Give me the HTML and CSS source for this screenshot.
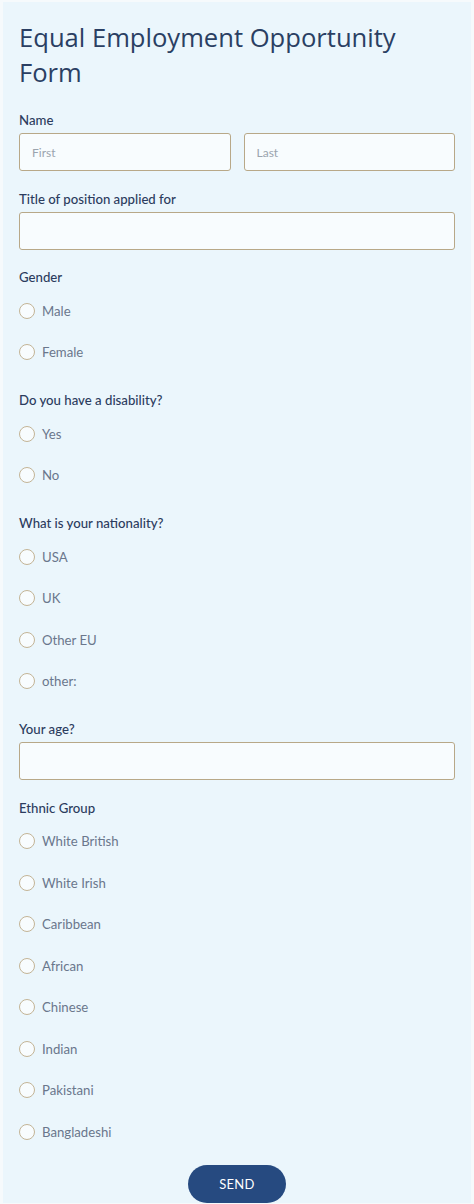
FILE: index.html
```html
<!DOCTYPE html>
<html lang="en">
<head>
<meta charset="utf-8">
<title>Equal Employment Opportunity Form</title>
<link rel="stylesheet" href="styles.css">
</head>
<body>
<form class="form">
  <h1 class="title">Equal Employment Opportunity Form</h1>

  <div class="field">
    <label class="label">Name</label>
    <div class="name-row">
      <input class="input" type="text" placeholder="First">
      <input class="input" type="text" placeholder="Last">
    </div>
  </div>

  <div class="field">
    <label class="label">Title of position applied for</label>
    <input class="input" type="text">
  </div>

  <div class="field radio-field">
    <div class="label">Gender</div>
    <div class="options">
      <label class="option"><span class="radio"></span><span class="opt-text">Male</span></label>
      <label class="option"><span class="radio"></span><span class="opt-text">Female</span></label>
    </div>
  </div>

  <div class="field radio-field">
    <div class="label">Do you have a disability?</div>
    <div class="options">
      <label class="option"><span class="radio"></span><span class="opt-text">Yes</span></label>
      <label class="option"><span class="radio"></span><span class="opt-text">No</span></label>
    </div>
  </div>

  <div class="field radio-field">
    <div class="label">What is your nationality?</div>
    <div class="options">
      <label class="option"><span class="radio"></span><span class="opt-text">USA</span></label>
      <label class="option"><span class="radio"></span><span class="opt-text">UK</span></label>
      <label class="option"><span class="radio"></span><span class="opt-text">Other EU</span></label>
      <label class="option"><span class="radio"></span><span class="opt-text">other:</span></label>
    </div>
  </div>

  <div class="field">
    <label class="label">Your age?</label>
    <input class="input" type="text">
  </div>

  <div class="field radio-field last-field">
    <div class="label">Ethnic Group</div>
    <div class="options">
      <label class="option"><span class="radio"></span><span class="opt-text">White British</span></label>
      <label class="option"><span class="radio"></span><span class="opt-text">White Irish</span></label>
      <label class="option"><span class="radio"></span><span class="opt-text">Caribbean</span></label>
      <label class="option"><span class="radio"></span><span class="opt-text">African</span></label>
      <label class="option"><span class="radio"></span><span class="opt-text">Chinese</span></label>
      <label class="option"><span class="radio"></span><span class="opt-text">Indian</span></label>
      <label class="option"><span class="radio"></span><span class="opt-text">Pakistani</span></label>
      <label class="option"><span class="radio"></span><span class="opt-text">Bangladeshi</span></label>
    </div>
  </div>

  <div class="actions">
    <button class="send" type="button">SEND</button>
  </div>
</form>
</body>
</html>
```

FILE: styles.css
```css
* { box-sizing: border-box; }

html, body {
  margin: 0;
  padding: 0;
  background: #f6fafc;
}

body {
  padding: 2px 3px 0 3px;
  font-family: Lato, "Open Sans", Arial, sans-serif;
}

.form {
  background: #ebf6fc;
  padding: 18px 16px 0 16px;
}

.title {
  margin: 0 0 22px 0;
  font-family: "Open Sans", Arial, sans-serif;
  font-weight: 400;
  font-size: 25.6px;
  line-height: 35px;
  color: #2a3f63;
  letter-spacing: 0;
}

.field {
  margin-bottom: 19.5px;
}

.radio-field {
  margin-bottom: 19px;
}

.last-field {
  margin-bottom: 12px;
}

.label {
  display: block;
  font-size: 13.2px;
  line-height: 16px;
  color: #2b3c5e;
  font-weight: 500;
  margin-bottom: 5px;
}

.name-row {
  display: grid;
  grid-template-columns: 1fr 1fr;
  column-gap: 13px;
}

.input {
  display: block;
  width: 100%;
  height: 38px;
  border: 1px solid #b8a888;
  border-radius: 3px;
  background: #f8fcfe;
  padding: 0 12px;
  font-family: Lato, "Open Sans", Arial, sans-serif;
  font-size: 12px;
  color: #2b3c5e;
  outline: none;
}

.input::placeholder {
  color: #9ba4ae;
}

.options {
  display: flex;
  flex-direction: column;
  margin-top: 1px;
}

.option {
  display: flex;
  align-items: center;
  height: 41.5px;
}

.radio {
  width: 16px;
  height: 16px;
  border: 1px solid #c3b496;
  border-radius: 50%;
  background: #f8fcfe;
  flex: none;
  margin-right: 7px;
}

.opt-text {
  font-size: 13.2px;
  color: #6a778c;
}

.actions {
  display: flex;
  justify-content: center;
}

.send {
  width: 98px;
  height: 38px;
  border: none;
  border-radius: 19px;
  background: #264a80;
  color: #ffffff;
  font-family: Lato, "Open Sans", Arial, sans-serif;
  font-size: 13px;
  letter-spacing: 0.3px;
}
```
